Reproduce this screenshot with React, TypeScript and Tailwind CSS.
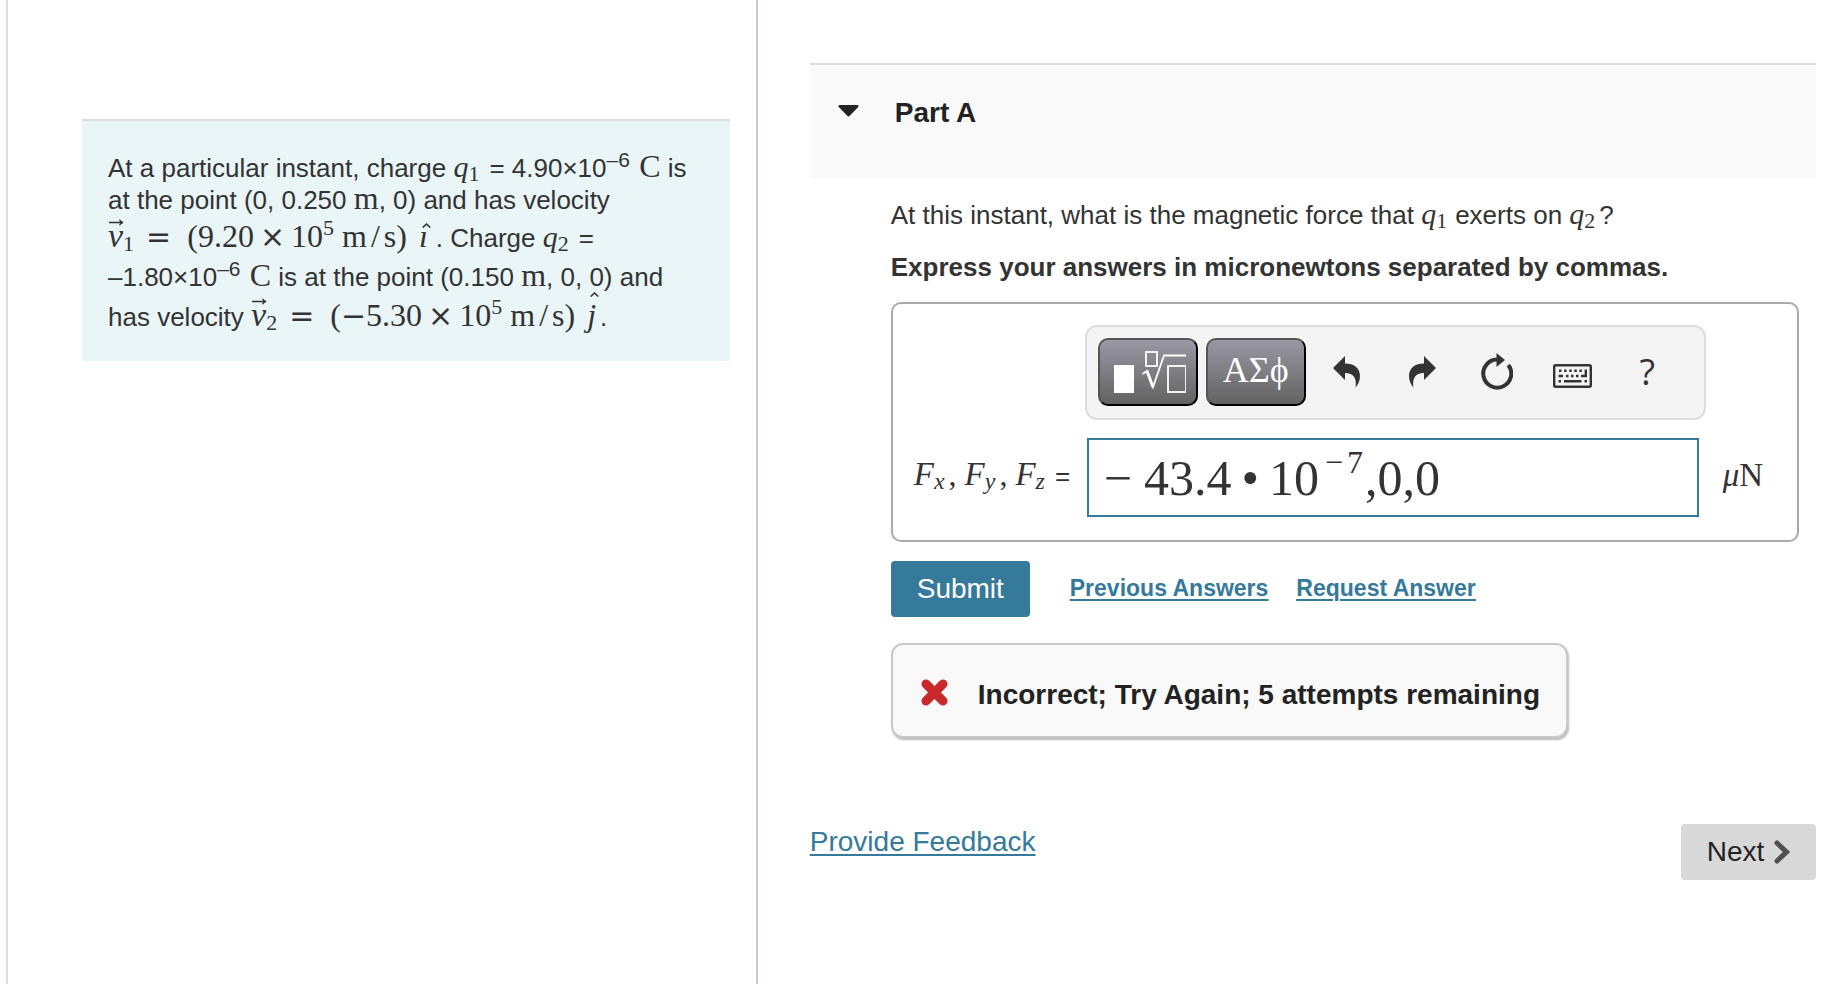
import React from 'react';

interface ChildrenProps {
    children: React.ReactNode;
}

const Rm: React.FC<ChildrenProps> = ({ children }) => (
    <span className="font-['Liberation_Serif',serif] text-[32px] leading-none">{children}</span>
);

const Op: React.FC<ChildrenProps> = ({ children }) => (
    <span className="font-['DejaVu_Sans',sans-serif] text-[30px] leading-none">{children}</span>
);

interface SymbolProps {
    name: string;
    sub: string;
}

const Symbol: React.FC<SymbolProps> = ({ name, sub }) => (
    <span className="font-['Liberation_Serif',serif] leading-none">
        <i className="text-[30px] leading-none">{name}</i>
        <sub className="static text-[22px] leading-none align-[-4px]">{sub}</sub>
    </span>
);

const Vector: React.FC<SymbolProps> = ({ name, sub }) => (
    <span className="relative inline-block leading-none">
        <svg className="absolute left-0 top-0 w-4 h-[7px]" viewBox="0 0 16 7" fill="none" stroke="currentColor" strokeWidth="1.3" aria-hidden="true">
            <path d="M1 3.5H14.5M11.5 .7Q12.5 3 15 3.5Q12.5 4 11.5 6.3" />
        </svg>
        <span className="font-['Liberation_Serif',serif] leading-none">
            <i className="text-[34px] leading-none">{name}</i>
            <sub className="static text-[22px] leading-none align-[-4px]">{sub}</sub>
        </span>
    </span>
);

const Hat: React.FC<ChildrenProps & { className: string }> = ({ children, className }) => (
    <span className="relative inline-block leading-none font-['Liberation_Serif',serif] text-[32px] italic">
        <svg className={`absolute w-[9px] h-[5px] ${className}`} viewBox="0 0 9 5" fill="none" stroke="currentColor" strokeWidth="1.6" aria-hidden="true">
            <path d="M.7 4.5L4.5 1L8.3 4.5" />
        </svg>
        {children}
    </span>
);

const Exp: React.FC<ChildrenProps> = ({ children }) => (
    <sup className="static mr-0.5 text-[21px] leading-none align-[10px]">{children}</sup>
);

const Speed: React.FC<{ value: React.ReactNode }> = ({ value }) => (
    <Rm>
        ({value}
        <span className="mx-1.5"><Op>×</Op></span>
        10<sup className="static text-[22px] leading-none align-[12px]">5</sup>
        <span className="ml-2">m</span><span className="mx-1">/</span>s)
    </Rm>
);

const Problem: React.FC = () => (
    <section className="bg-[#eaf5f8] border-t-2 border-[#ddd] pl-[26px] pt-7 pb-6 text-[26px] text-[#333] whitespace-nowrap">
        <div className="h-[33px] leading-[36px]">
            At a particular instant, charge <Symbol name="q" sub="1" />
            <span className="ml-2.5">= 4.90×10<Exp>–6</Exp></span> <Rm>C</Rm> is
        </div>
        <div className="h-[35px] leading-[36px]">
            at the point (0, 0.250 <Rm>m</Rm>, 0) and has velocity
        </div>
        <div className="h-10 leading-[40px]">
            <Vector name="v" sub="1" />
            <span className="ml-3 mr-4"><Op>=</Op></span>
            <Speed value="9.20" />
            <span className="ml-3"><Hat className="left-[3px] top-[3px]">ı</Hat></span>
            <span className="ml-2">. Charge </span>
            <Symbol name="q" sub="2" />
            <span className="ml-2.5">=</span>
        </div>
        <div className="h-[39px] leading-[40px]">
            –1.80×10<Exp>–6</Exp> <Rm>C</Rm> is at the point (0.150 <Rm>m</Rm>, 0, 0) and
        </div>
        <div className="h-[41px] leading-[40px]">
            has velocity <Vector name="v" sub="2" />
            <span className="ml-3 mr-4"><Op>=</Op></span>
            <Speed value={<><Op>−</Op>5.30</>} />
            <span className="ml-3"><Hat className="left-[3px] -top-[7px]">j</Hat></span>
            <span className="ml-1">.</span>
        </div>
    </section>
);

const UndoIcon: React.FC<{ className?: string }> = ({ className = '' }) => (
    <svg className={`w-7 h-8 ${className}`} viewBox="0 0 28 32" fill="currentColor" aria-hidden="true">
        <path d="M0 12L12 0V7.5C21 7.5 27 12 27 20C27 25 25 28.5 22.5 31.5C24 23 21 17 12 17V24Z" />
    </svg>
);

const ResetIcon: React.FC = () => (
    <svg className="w-8 h-[37px]" viewBox="0 0 32 37" fill="none" aria-hidden="true">
        <path d="M27.3 12A14 14 0 1 1 16 6.6" stroke="currentColor" strokeWidth="4" />
        <path d="M15.5 0L24 7L15.5 14Z" fill="currentColor" />
    </svg>
);

const KeyboardIcon: React.FC = () => (
    <svg className="w-[39px] h-6 mt-2" viewBox="0 0 39 24" fill="none" stroke="currentColor" aria-hidden="true">
        <rect x="1.2" y="1.2" width="36.6" height="21.6" rx="1.5" strokeWidth="2.4" />
        <path d="M6 6.8H29" strokeWidth="2.4" strokeDasharray="2.5 2.6" />
        <path d="M5.5 12H10M13 12H15.5M18 12H20.5M23 12H25.5M28 12H34M32.8 5.5V12" strokeWidth="2.4" />
        <path d="M5.5 17.3H8M11 17.3H28.5M31.5 17.3H34" strokeWidth="2.4" />
    </svg>
);

const PALETTE_BUTTON =
    'flex items-center justify-center w-[100px] h-[68px] rounded-[10px] border-2 border-t-[#555] border-l-[#555] border-r-black border-b-black bg-linear-to-b from-[#9a98a4] to-[#636363] text-white';
const TOOL_BUTTON = 'flex items-center justify-center w-[75px] h-[68px]';

const Toolbar: React.FC = () => (
    <div className="flex items-center w-[621px] h-[95px] pl-[11px] pb-0.5 bg-[#f4f4f4] border-2 border-[#ddd] rounded-xl text-[#333]" role="toolbar" aria-label="Equation tools">
        <button type="button" className={PALETTE_BUTTON} aria-label="Templates">
            <svg className="w-[76px] h-11" viewBox="0 0 76 44" fill="none" stroke="currentColor" aria-hidden="true">
                <rect x="4" y="15" width="20" height="28" fill="currentColor" stroke="none" />
                <rect x="36" y="2" width="11" height="14" strokeWidth="1.8" />
                <path d="M32.5 24L37 21L43 37L54 5.5H78" strokeWidth="1.8" />
                <path d="M37 21L43 37" strokeWidth="3" />
                <rect x="58" y="16" width="18" height="26" strokeWidth="1.8" />
            </svg>
        </button>
        <button type="button" className={`${PALETTE_BUTTON} ml-2 pb-1 font-['Liberation_Serif',serif] text-[36px]`}>ΑΣϕ</button>
        <button type="button" className={`${TOOL_BUTTON} ml-1`} aria-label="Undo"><UndoIcon /></button>
        <button type="button" className={TOOL_BUTTON} aria-label="Redo"><UndoIcon className="-scale-x-100" /></button>
        <button type="button" className={TOOL_BUTTON} aria-label="Reset"><ResetIcon /></button>
        <button type="button" className={TOOL_BUTTON} aria-label="Keyboard shortcuts"><KeyboardIcon /></button>
        <button type="button" className={`${TOOL_BUTTON} font-['Open_Sans',sans-serif] text-[36px]`} aria-label="Help">?</button>
    </div>
);

const Component: React.FC<{ axis: string }> = ({ axis }) => (
    <span className="font-['Liberation_Serif',serif] italic text-[33px] leading-none">
        F<sub className="static text-[24px] leading-none align-[-4px]">{axis}</sub>
    </span>
);

const Comma: React.FC = () => <span className="ml-1"><Rm>, </Rm></span>;

const AnswerBox: React.FC = () => (
    <div className="w-[908px] max-w-full mt-[17px] pt-[21px] pb-[23px] border-2 border-[#aaa] rounded-[10px] text-[#333]">
        <div className="ml-[192px]"><Toolbar /></div>
        <div className="flex items-center mt-[18px]">
            <label id="answer-label" className="w-[194px] pl-[21px] pb-0.5 text-[26px] whitespace-nowrap">
                <Component axis="x" /><Comma /><Component axis="y" /><Comma /><Component axis="z" />
                <span className="ml-2.5">=</span>
            </label>
            <div
                role="textbox"
                aria-labelledby="answer-label"
                contentEditable
                suppressContentEditableWarning
                className="w-[612px] h-[79px] pl-[15px] border-2 border-[#35799b] font-['Liberation_Serif',serif] text-[50px] leading-[76px] whitespace-nowrap outline-none"
            >
                <span className="mr-3">−</span>43.4<span className="mx-2.5">•</span>10
                <sup className="static ml-1.5 text-[32px] leading-none align-[22px]">−<span className="ml-1">7</span></sup>
                <span className="ml-0.5">,0,0</span>
            </div>
            <span className="ml-6 pb-1 font-['Liberation_Serif',serif] text-[33px]"><i>μ</i>N</span>
        </div>
    </div>
);

const PartA: React.FC = () => (
    <section>
        <header className="flex h-[115px] pl-7 pt-[30px] bg-[#f9f9f9] border-t-2 border-[#ddd] text-[#222]">
            <button type="button" className="flex items-center gap-9 h-9 text-[28px] font-bold" aria-expanded="true">
                <svg className="w-[21px] h-3 -mt-1" viewBox="0 0 21 12" fill="currentColor" aria-hidden="true">
                    <path d="M1.5 0H19.5Q21.5 .5 20 2.3L12 10.5Q10.5 12.5 9 10.5L1 2.3Q-.5 .5 1.5 0Z" />
                </svg>
                Part A
            </button>
        </header>
        <div className="pl-[81px]">
            <p className="mt-[19px] h-9 text-[26px] leading-[36px] text-[#333] whitespace-nowrap">
                At this instant, what is the magnetic force that <Symbol name="q" sub="1" />
                <span className="ml-2">exerts on </span><Symbol name="q" sub="2" /><span className="ml-1">?</span>
            </p>
            <p className="mt-4 text-[26px] leading-[36px] font-bold text-[#333] whitespace-nowrap">
                Express your answers in micronewtons separated by commas.
            </p>
            <AnswerBox />
            <div className="flex items-center mt-[19px]">
                <button type="button" className="w-[139px] h-14 rounded bg-[#35799b] text-white text-[28px]">Submit</button>
                <div className="flex gap-7 ml-10 pb-0.5 text-[23px] font-bold text-[#35799b] underline decoration-2 underline-offset-3">
                    <a href="#previous">Previous Answers</a>
                    <a href="#request">Request Answer</a>
                </div>
            </div>
            <div role="status" className="flex items-center w-fit h-[95px] mt-[26px] pl-7 pr-[26px] pt-2 gap-[30px] bg-[#f9f9f9] border-2 border-[#c8c8c8] rounded-xl shadow-[1px_2px_2px_#bbb] text-[28px] font-bold text-[#222]">
                <svg className="w-[27px] h-[27px] -mt-1" viewBox="0 0 27 27" fill="none" stroke="#c9282d" strokeWidth="9" strokeLinecap="round" aria-hidden="true">
                    <path d="M5 5L22 22M22 5L5 22" />
                </svg>
                Incorrect; Try Again; 5 attempts remaining
            </div>
        </div>
    </section>
);

const App: React.FC = () => (
    <div className="flex min-h-screen bg-white font-['Liberation_Sans',Arial,sans-serif]">
        <aside className="w-[41.5%] pl-1.5 border-r-2 border-[#bfcadb]">
            <div className="min-h-screen pl-[74px] pr-[26px] pt-[119px] border-l-2 border-[#ddd]">
                <Problem />
            </div>
        </aside>
        <main className="flex-1 pl-[52px] pr-2.5 pt-[63px]">
            <PartA />
            <footer className="flex items-start justify-between mt-[86px]">
                <a href="#feedback" className="text-[28px] leading-[36px] text-[#35799b] underline decoration-2 underline-offset-3">Provide Feedback</a>
                <button type="button" className="flex items-center justify-center gap-2.5 w-[135px] h-14 rounded bg-[#d8d8d8] text-[28px] text-[#222]">
                    Next
                    <svg className="w-4 h-6" viewBox="0 0 16 24" fill="none" stroke="#505050" strokeWidth="5" strokeLinecap="round" aria-hidden="true">
                        <path d="M3 3L12.5 12L3 21" />
                    </svg>
                </button>
            </footer>
        </main>
    </div>
);

export default App;
